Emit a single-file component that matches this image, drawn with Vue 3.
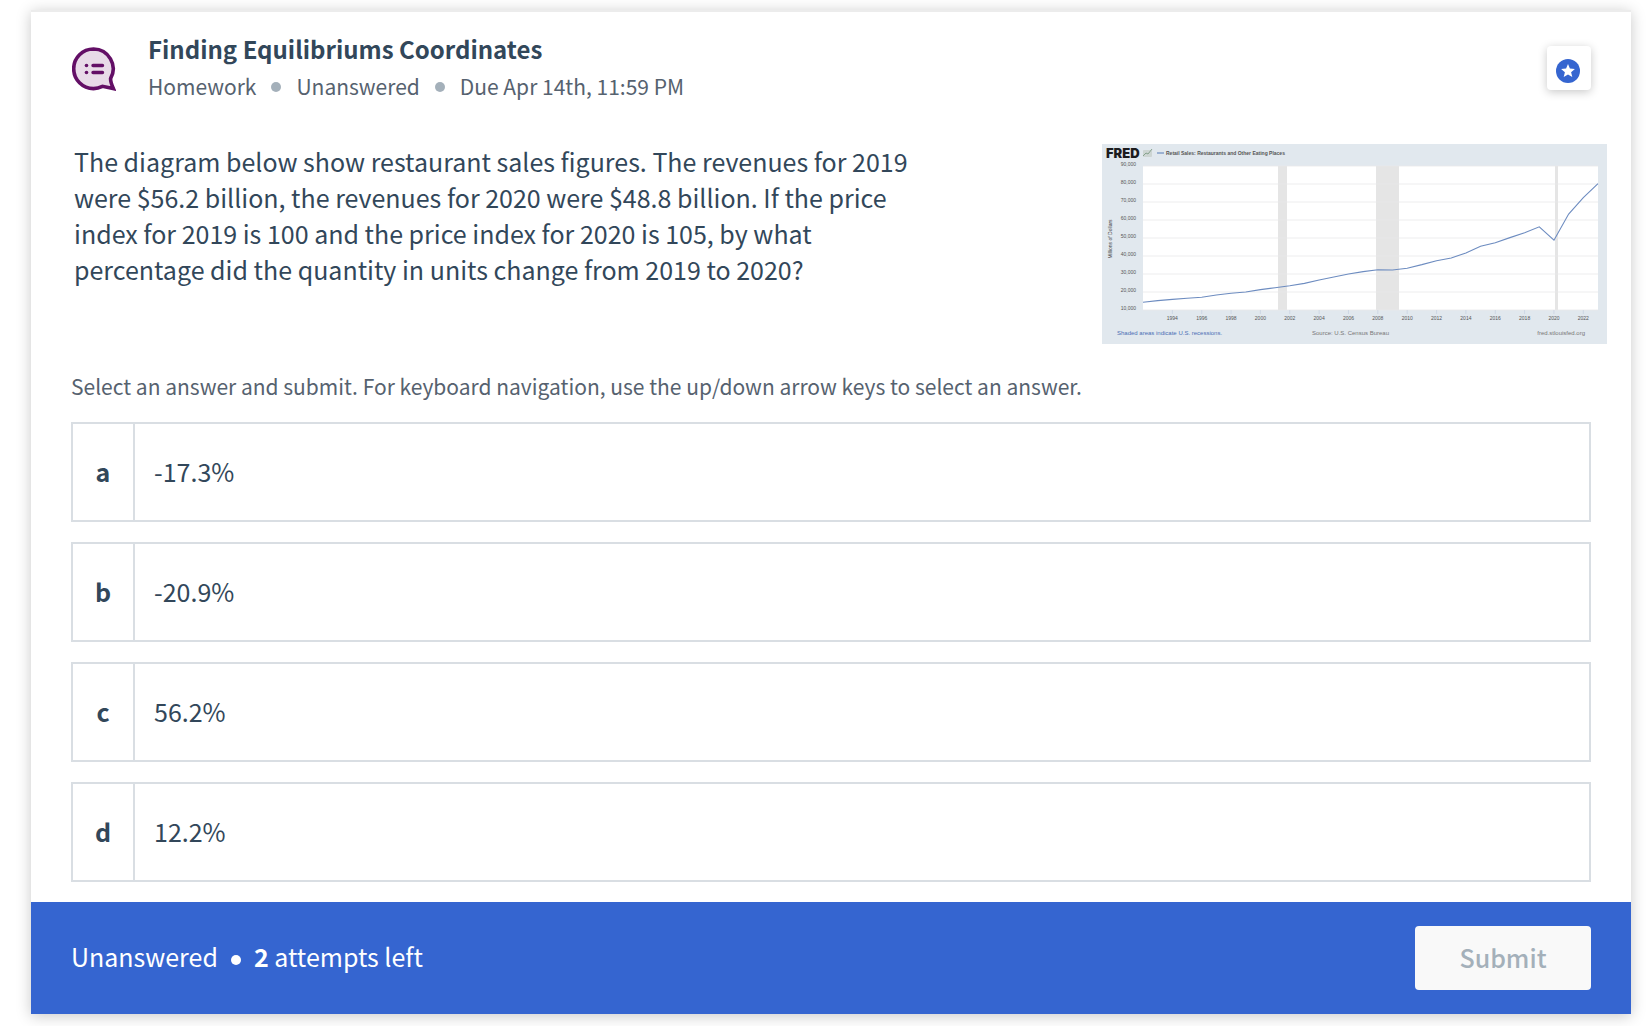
<template>
  <main class="page">
    <form class="card" @submit.prevent>
      <header class="header">
        <svg class="type-icon" viewBox="0 0 44 44" aria-hidden="true">
          <path
            d="M21.5 2 A19.8 19.8 0 1 0 21.5 41.6 C25 41.6 27.5 40.8 30.5 39.3 L41.4 41.6 C40 38.4 38.4 35 38.6 31.5 A19.8 19.8 0 0 0 21.5 2 Z"
            fill="#e8dbe8"
            stroke="#630f66"
            stroke-width="3.6"
          />
          <circle cx="14.5" cy="18.5" r="1.8" fill="#630f66" />
          <circle cx="14.5" cy="25.5" r="1.8" fill="#630f66" />
          <path d="M21 18.5 H30.5 M21 25.5 H30.5" stroke="#630f66" stroke-width="3.4" stroke-linecap="round" />
        </svg>
        <div class="heading">
          <h1>Finding Equilibriums Coordinates</h1>
          <p class="meta">
            <span>Homework</span>
            <i class="dot"></i>
            <span>Unanswered</span>
            <i class="dot"></i>
            <span>Due Apr 14th, 11:59 PM</span>
          </p>
        </div>
        <button class="star" type="button" aria-label="Bookmark question">
          <svg viewBox="0 0 24 24">
            <circle cx="12" cy="12" r="12" fill="#3565d0" />
            <path d="M12 4.9 L13.9 9.6 L18.9 10 L15.1 13.2 L16.3 18.1 L12 15.4 L7.7 18.1 L8.9 13.2 L5.1 10 L10.1 9.6 Z" fill="#fff" />
          </svg>
        </button>
      </header>

      <section class="question">
        <p class="prompt">
          The diagram below show restaurant sales figures. The revenues for 2019 were $56.2 billion,
          the revenues for 2020 were $48.8 billion. If the price index for 2019 is 100 and the price
          index for 2020 is 105, by what percentage did the quantity in units change from 2019 to 2020?
        </p>
        <svg class="chart" viewBox="0 0 505 200" role="img" aria-label="Retail sales chart">
          <rect width="505" height="200" fill="#e1e8ee" />
          <rect x="41" y="22" width="455" height="144" fill="#fff" />
          <rect
            v-for="r in recessions"
            :key="r.from"
            :x="r.from"
            y="22"
            :width="r.to - r.from"
            height="144"
            fill="#e5e5e5"
          />
          <g v-for="v in yTicks" :key="v">
            <line x1="41" x2="496" :y1="yPos(v)" :y2="yPos(v)" stroke="#e9e9ea" stroke-width="0.8" />
            <text x="34" :y="yPos(v)" text-anchor="end" class="tick">{{ v.toLocaleString('en-US') }}</text>
          </g>
          <g v-for="year in xTicks" :key="year">
            <line :x1="xPos(year)" :x2="xPos(year)" y1="166" y2="170" stroke="#c9d3e2" stroke-width="0.8" />
            <text :x="xPos(year)" y="176" text-anchor="middle" class="tick">{{ year }}</text>
          </g>
          <polyline :points="line" fill="none" stroke="#6d8cc0" stroke-width="1.1" />

          <text x="4" y="14" class="brand">FRED</text>
          <rect x="41" y="6" width="9" height="7" rx="1" fill="#cdd5d3" />
          <path d="M41 12 L44 9 L46 10 L50 5" fill="none" stroke="#7e9c84" stroke-width="0.9" />
          <line x1="55" x2="62" y1="9" y2="9" stroke="#6d8cc0" stroke-width="1.2" />
          <text x="64" y="11" class="legend">Retail Sales: Restaurants and Other Eating Places</text>
          <text transform="translate(10 95) rotate(-90)" text-anchor="middle" class="axis">Millions of Dollars</text>
          <text x="15" y="191" class="note shaded">Shaded areas indicate U.S. recessions.</text>
          <text x="210" y="191" class="note">Source: U.S. Census Bureau</text>
          <text x="483" y="191" text-anchor="end" class="note">fred.stlouisfed.org</text>
        </svg>
      </section>

      <fieldset class="answers">
        <legend>Select an answer and submit. For keyboard navigation, use the up/down arrow keys to select an answer.</legend>
        <label v-for="option in options" :key="option.key" class="answer">
          <input v-model="selected" type="radio" name="answer" :value="option.key" />
          <span class="letter">{{ option.key }}</span>
          <span class="value">{{ option.text }}</span>
        </label>
      </fieldset>

      <footer class="footer">
        <p class="status">
          <span>Unanswered</span>
          <i class="dot"></i>
          <span><b>2</b> attempts left</span>
        </p>
        <button class="submit" type="submit" :disabled="!selected">Submit</button>
      </footer>
    </form>
  </main>
</template>

<script setup>
import { ref, computed } from 'vue';

const selected = ref('');
const options = [
  { key: 'a', text: '-17.3%' },
  { key: 'b', text: '-20.9%' },
  { key: 'c', text: '56.2%' },
  { key: 'd', text: '12.2%' },
];

// one value per year, 1992 to 2023, in millions of dollars
const sales = [
  14300, 15200, 15900, 16500, 17100, 18300, 19300, 20000, 21300, 22400, 23500,
  24800, 26700, 28300, 30000, 31300, 32400, 32200, 33200, 35200, 37400, 38900,
  41700, 45400, 47400, 50200, 52900, 56200, 48800, 63300, 72400, 80200,
];
const recessions = [
  { from: 176, to: 185 },
  { from: 274, to: 297 },
  { from: 453, to: 456 },
];
const yTicks = [90000, 80000, 70000, 60000, 50000, 40000, 30000, 20000, 10000];
const xTicks = Array.from({ length: 15 }, (_, i) => 1994 + i * 2);

const xPos = (year) => 41 + ((year - 1992) * 455) / 31;
const yPos = (value) => 166 - ((value - 10000) * 144) / 80000;
const line = computed(() => sales.map((v, i) => `${xPos(1992 + i)},${yPos(v)}`).join(' '));
</script>

<style>
body {
  margin: 0;
  background: #fff;
}
</style>

<style scoped>
.page {
  padding: 10px 18px 12px 31px;
  font-family: "Noto Sans CJK SC", "Noto Sans", sans-serif;
  font-size: 25px;
  line-height: 36px;
  color: #32475a;
}
h1,
p {
  margin: 0;
}
.card {
  background: #fff;
  border-top: 2px solid #ececec;
  box-shadow: 0 2px 14px rgba(0, 0, 0, 0.22);
}
.header {
  display: flex;
  align-items: flex-start;
  padding: 18px 40px 0;
}
.type-icon {
  width: 44px;
  height: 44px;
  margin: 17px 32px 0 1px;
}
.heading {
  flex: 1;
}
h1 {
  font-size: 24px;
  line-height: 38px;
  font-weight: 700;
}
.meta {
  display: flex;
  align-items: center;
  gap: 15px;
  font-size: 21px;
  color: #56626f;
}
.dot {
  width: 10px;
  height: 10px;
  margin-top: 2px;
  border-radius: 50%;
  background: #a4b0ba;
}
.star {
  display: flex;
  justify-content: center;
  align-items: center;
  width: 44px;
  height: 44px;
  margin-top: 16px;
  padding: 6px 2px 0 0;
  border: 0;
  border-radius: 4px;
  background: #fff;
  box-shadow: 0 2px 10px rgba(0, 0, 0, 0.22);
}
.star svg {
  width: 24px;
  height: 24px;
}
.question {
  display: flex;
  justify-content: space-between;
  align-items: flex-start;
  padding: 39px 24px 0 43px;
}
.prompt {
  flex: 0 1 860px;
}
.chart {
  width: 505px;
  height: 200px;
  margin-top: 1px;
  flex-shrink: 0;
  font-family: "Liberation Sans", sans-serif;
}
.tick {
  font-size: 5px;
  fill: #555;
}
.brand {
  font-family: Inter, "Liberation Sans", sans-serif;
  font-size: 13px;
  font-weight: 900;
  fill: #1c1c1e;
}
.legend {
  font-size: 5px;
  font-weight: 700;
  fill: #555;
}
.axis {
  font-size: 5px;
  fill: #444;
}
.note {
  font-size: 6px;
  fill: #777;
}
.shaded {
  fill: #4a6fb5;
}
.answers {
  display: flex;
  flex-direction: column;
  gap: 20px;
  margin: 0;
  padding: 0 40px 20px;
  border: 0;
}
legend {
  padding: 24px 0 18px;
  font-size: 21px;
  color: #56626f;
}
.answer {
  position: relative;
  display: flex;
  height: 96px;
  border: 2px solid #d9dee3;
  cursor: pointer;
}
.answer input {
  position: absolute;
  opacity: 0;
}
.answer:focus-within {
  border-color: #3565d0;
}
.letter,
.value {
  display: flex;
  align-items: center;
  padding-bottom: 2px;
}
.letter {
  justify-content: center;
  width: 60px;
  border-right: 2px solid #d9dee3;
  font-weight: 700;
}
.value {
  padding-left: 19px;
}
.footer {
  display: flex;
  justify-content: space-between;
  align-items: center;
  padding: 24px 40px;
  background: #3565d0;
  color: #fff;
}
.status {
  display: flex;
  align-items: center;
  gap: 13px;
  padding-bottom: 4px;
}
.status .dot {
  margin-top: 8px;
  background: #fff;
}
.submit {
  width: 176px;
  height: 64px;
  padding: 0 0 2px;
  border: 0;
  border-radius: 4px;
  background: #f9f9f9;
  color: #a4b0ba;
  font: inherit;
  font-weight: 500;
}
</style>
